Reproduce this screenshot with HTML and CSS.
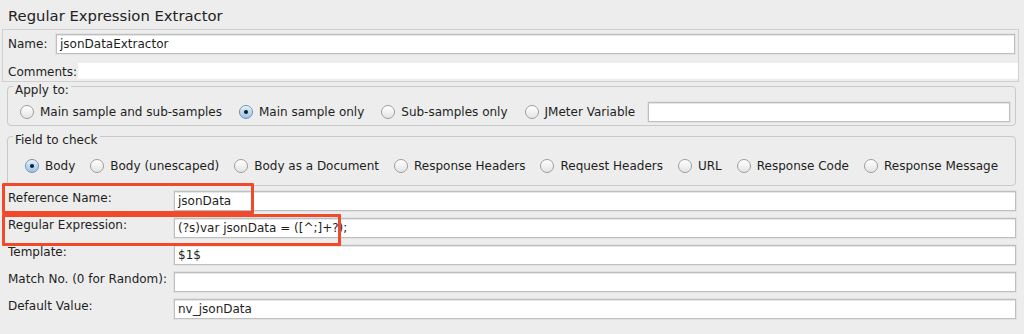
FILE: index.html
```html
<!DOCTYPE html>
<html>
<head>
<meta charset="utf-8">
<title>Regular Expression Extractor</title>
<link rel="stylesheet" href="styles.css">
</head>
<body>
<div class="page">
  <h1 class="title">Regular Expression Extractor</h1>

  <div class="name-panel">
    <div class="name-row">
      <span class="lbl name-lbl">Name:</span>
      <div class="input">jsonDataExtractor</div>
    </div>
    <div class="comments-row">
      <span class="lbl comments-lbl">Comments:</span>
      <div class="plain-field"></div>
    </div>
  </div>

  <fieldset class="group apply">
    <legend>Apply to:</legend>
    <div class="radio-row">
      <span class="radio-item"><span class="radio"></span>Main sample and sub-samples</span>
      <span class="radio-item"><span class="radio on"></span>Main sample only</span>
      <span class="radio-item"><span class="radio"></span>Sub-samples only</span>
      <span class="radio-item"><span class="radio"></span>JMeter Variable</span>
      <div class="input var-input"></div>
    </div>
  </fieldset>

  <fieldset class="group field">
    <legend>Field to check</legend>
    <div class="radio-row">
      <span class="radio-item"><span class="radio on"></span>Body</span>
      <span class="radio-item"><span class="radio"></span>Body (unescaped)</span>
      <span class="radio-item"><span class="radio"></span>Body as a Document</span>
      <span class="radio-item"><span class="radio"></span>Response Headers</span>
      <span class="radio-item"><span class="radio"></span>Request Headers</span>
      <span class="radio-item"><span class="radio"></span>URL</span>
      <span class="radio-item"><span class="radio"></span>Response Code</span>
      <span class="radio-item"><span class="radio"></span>Response Message</span>
    </div>
  </fieldset>

  <div class="fields">
    <span class="lbl">Reference Name:</span>
    <div class="input">jsonData</div>
    <span class="lbl">Regular Expression:</span>
    <div class="input">(?s)var jsonData = ([^;]+?);</div>
    <span class="lbl">Template:</span>
    <div class="input">$1$</div>
    <span class="lbl">Match No. (0 for Random):</span>
    <div class="input"></div>
    <span class="lbl">Default Value:</span>
    <div class="input">nv_jsonData</div>

    <div class="mark mark-ref"></div>
    <div class="mark mark-regex"></div>
  </div>
</div>
</body>
</html>
```

FILE: styles.css
```css
html, body {
  margin: 0;
  padding: 0;
}

body {
  background: #ededed;
  font-family: "DejaVu Sans", "Noto Sans", sans-serif;
  font-size: 12px;
  color: #1e1e1e;
}

.page {
  width: 1024px;
  height: 334px;
  overflow: hidden;
}

.title {
  margin: 0;
  height: 29px;
  line-height: 32px;
  padding-left: 8px;
  font-size: 14.8px;
  font-weight: normal;
  color: #222;
}

.lbl {
  line-height: 14px;
  white-space: nowrap;
}

.input {
  box-sizing: border-box;
  height: 20px;
  background: #fff;
  border: 1px solid #bfbfbf;
  box-shadow: 0 0 0 1px #e2e2e2, inset 0 1px 0 #e6e6e6;
  padding: 0 3px;
  line-height: 19px;
  white-space: nowrap;
  overflow: hidden;
}

/* Name / Comments panel */
.name-panel {
  box-sizing: border-box;
  height: 53px;
  margin: 0 5px 0 2px;
  border: 1px solid #d0d0d0;
  display: flex;
  flex-direction: column;
}

.name-row {
  display: flex;
  align-items: center;
  margin-top: 4px;
  padding-left: 5px;
  padding-right: 3px;
}

.name-lbl {
  width: 48px;
  flex: none;
}

.name-row .input {
  flex: 1;
}

.comments-row {
  display: flex;
  align-items: center;
  margin-top: 9px;
  padding-left: 5px;
  height: 16px;
}

.comments-lbl {
  width: 70px;
  flex: none;
  padding-top: 2px;
}

.plain-field {
  flex: 1;
  height: 16px;
  background: #fff;
}

/* Titled groups */
.group {
  margin: -7px 8px 0 7px;
  padding: 0;
  border: 1px solid #c9c9c9;
  border-radius: 4px;
  min-width: 0;
}

.group legend {
  margin-left: 5px;
  padding: 8px 2px 0;
  line-height: 14px;
  color: #222;
}

.apply .radio-row {
  padding: 5px 5px 3px 12px;
}

.field {
  margin-top: -1px;
}

.field .radio-row {
  padding: 9px 5px 9px 17px;
}

.radio-row {
  display: flex;
  align-items: center;
  height: 20px;
}

.radio-item {
  display: inline-flex;
  align-items: center;
  white-space: nowrap;
  margin-right: 17px;
}

.field .radio-item {
  margin-right: 15px;
}

.radio-item:last-of-type {
  margin-right: 0;
}

.apply .radio-item:last-of-type {
  margin-right: 13px;
}

.radio {
  box-sizing: border-box;
  width: 14px;
  height: 14px;
  border-radius: 50%;
  border: 1px solid #9d9d9d;
  background: linear-gradient(#ffffff, #e4e4e4);
  box-shadow: inset 0 1px 1px rgba(255,255,255,0.8);
  margin-right: 6px;
  display: inline-flex;
  align-items: center;
  justify-content: center;
  flex: none;
}

.radio.on {
  border-color: #6f8fb0;
  background: linear-gradient(#d9ecfb, #9cc6ea);
}

.radio.on::after {
  content: "";
  width: 4px;
  height: 4px;
  border-radius: 50%;
  background: #1a1a1a;
}

.var-input {
  flex: 1;
  height: 20px;
}

/* Labelled fields */
.fields {
  position: relative;
  display: grid;
  grid-template-columns: 166px 1fr;
  grid-auto-rows: 20px;
  row-gap: 7px;
  margin-top: 5px;
  padding: 0 8px;
}

.fields .lbl {
  align-self: start;
  padding-top: 0;
}

/* Red annotation boxes */
.mark {
  position: absolute;
  box-sizing: border-box;
  border: 3px solid #f04a2a;
  border-radius: 1px;
}

.mark-ref {
  left: 2px;
  top: -8px;
  width: 252px;
  height: 31px;
}

.mark-regex {
  left: 2px;
  top: 23px;
  width: 339px;
  height: 32px;
}
```
